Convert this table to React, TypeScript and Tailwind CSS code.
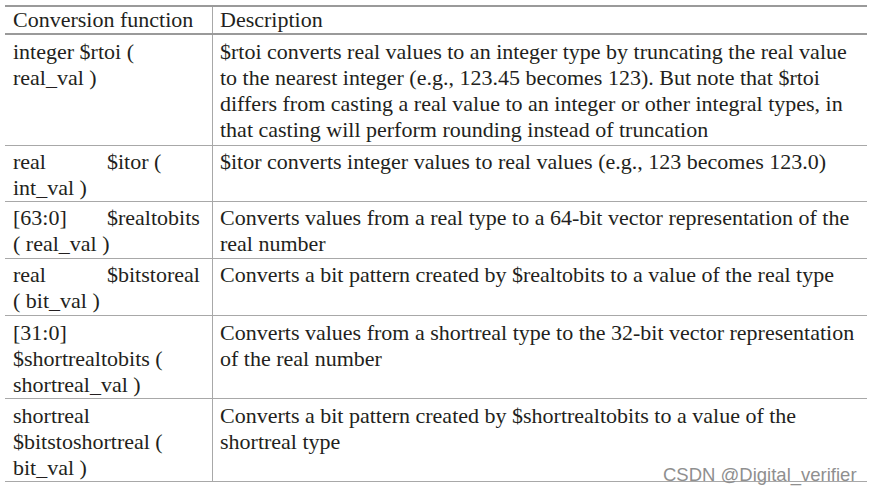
import React from "react";

type Row = {
  fn: React.ReactNode[];
  desc: string[];
  h: string;
  pt: string;
};

// first word is padded so the second one starts on the same column (justified look)
const Split = ({ a, b }: { a: string; b: string }) => (
  <div>
    <span className="inline-block w-[94px]">{a}</span>
    {b}
  </div>
);

const rows: Row[] = [
  {
    fn: ["integer $rtoi (", "real_val )"],
    desc: [
      "$rtoi converts real values to an integer type by truncating the real value",
      "to the nearest integer (e.g., 123.45 becomes 123). But note that $rtoi",
      "differs from casting a real value to an integer or other integral types, in",
      "that casting will perform rounding instead of truncation",
    ],
    h: "h-[111px]",
    pt: "pt-[4px]",
  },
  {
    fn: [<Split key="a" a="real" b="$itor (" />, "int_val )"],
    desc: ["$itor converts integer values to real values (e.g., 123 becomes 123.0)"],
    h: "h-[56px]",
    pt: "pt-[3px]",
  },
  {
    fn: [<Split key="a" a="[63:0]" b="$realtobits" />, "( real_val )"],
    desc: [
      "Converts values from a real type to a 64-bit vector representation of the",
      "real number",
    ],
    h: "h-[57px]",
    pt: "pt-[3px]",
  },
  {
    fn: [<Split key="a" a="real" b="$bitstoreal" />, "( bit_val )"],
    desc: ["Converts a bit pattern created by $realtobits to a value of the real type"],
    h: "h-[57px]",
    pt: "pt-[3px]",
  },
  {
    fn: ["[31:0]", "$shortrealtobits (", "shortreal_val )"],
    desc: [
      "Converts values from a shortreal type to the 32-bit vector representation",
      "of the real number",
    ],
    h: "h-[83px]",
    pt: "pt-[4px]",
  },
  {
    fn: ["shortreal", "$bitstoshortreal (", "bit_val )"],
    desc: [
      "Converts a bit pattern created by $shortrealtobits to a value of the",
      "shortreal type",
    ],
    h: "h-[83px]",
    pt: "pt-[4px]",
  },
];

export default function App() {
  return (
    <div className="relative w-[874px] h-[490px] bg-white pt-[5px] pl-[5px] overflow-hidden">
      <div
        className="w-[862px] border-t-2 border-[#9a9a9a] text-[#231f20] text-[22px] leading-[26px]"
        style={{ fontFamily: '"Liberation Serif", "Times New Roman", "DejaVu Serif", serif' }}
      >
        {/* header */}
        <div className="flex h-[28px] border-b-2 border-[#9a9a9a]">
          <div className="w-[208px] pl-[8px] border-r border-[#a8a8a8]">Conversion function</div>
          <div className="flex-1 pl-[7px]">Description</div>
        </div>

        {rows.map((r, i) => (
          <div key={i} className={`flex ${r.h} border-b border-[#a8a8a8]`}>
            <div className={`w-[208px] pl-[8px] ${r.pt} border-r border-[#a8a8a8]`}>
              {r.fn.map((l, j) => (typeof l === "string" ? <div key={j}>{l}</div> : l))}
            </div>
            <div className={`flex-1 pl-[7px] ${r.pt}`}>
              {r.desc.map((l, j) => (
                <div key={j} className="whitespace-nowrap">
                  {l}
                </div>
              ))}
            </div>
          </div>
        ))}
      </div>

      {/* watermark */}
      <div
        className="absolute left-[663px] top-[461px] text-[18.5px] text-[#8f8f8f] whitespace-nowrap"
        style={{ fontFamily: '"Liberation Sans", Arial, sans-serif' }}
      >
        CSDN @Digital_verifier
      </div>
    </div>
  );
}
